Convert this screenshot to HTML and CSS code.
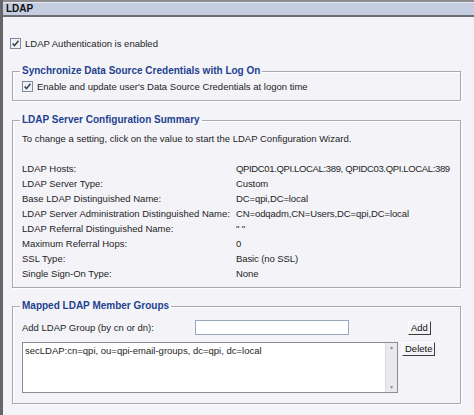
FILE: index.html
```html
<!DOCTYPE html>
<html lang="en">

<head>
    <meta charset="UTF-8">
    <title>LDAP</title>
    <link rel="stylesheet" href="styles.css">
</head>

<body>
    <div class="titlebar">LDAP</div>

    <div class="content">
        <div class="check-row top-check">
            <svg class="check" width="11" height="11" viewBox="0 0 11 11">
                <rect x="0.5" y="0.5" width="10" height="10" fill="#eef1f6" stroke="#7d8aa3" />
                <path d="M2.6 5.4 L4.5 7.6 L8.4 2.8" fill="none" stroke="#333a4a" stroke-width="1.5" />
            </svg>
            <span>LDAP Authentication is enabled</span>
        </div>

        <fieldset class="group sync-group">
            <legend>Synchronize Data Source Credentials with Log On</legend>
            <div class="check-row">
                <svg class="check" width="11" height="11" viewBox="0 0 11 11">
                    <rect x="0.5" y="0.5" width="10" height="10" fill="#eef1f6" stroke="#7d8aa3" />
                    <path d="M2.6 5.4 L4.5 7.6 L8.4 2.8" fill="none" stroke="#333a4a" stroke-width="1.5" />
                </svg>
                <span>Enable and update user's Data Source Credentials at logon time</span>
            </div>
        </fieldset>

        <fieldset class="group summary-group">
            <legend>LDAP Server Configuration Summary</legend>
            <p class="hint">To change a setting, click on the value to start the LDAP Configuration Wizard.</p>
            <div class="summary">
                <span>LDAP Hosts:</span><span class="val hosts">QPIDC01.QPI.LOCAL:389, QPIDC03.QPI.LOCAL:389</span>
                <span>LDAP Server Type:</span><span class="val">Custom</span>
                <span>Base LDAP Distinguished Name:</span><span class="val">DC=qpi,DC=local</span>
                <span>LDAP Server Administration Distinguished Name:</span><span class="val">CN=odqadm,CN=Users,DC=qpi,DC=local</span>
                <span>LDAP Referral Distinguished Name:</span><span class="val">" "</span>
                <span>Maximum Referral Hops:</span><span class="val">0</span>
                <span>SSL Type:</span><span class="val">Basic (no SSL)</span>
                <span>Single Sign-On Type:</span><span class="val">None</span>
            </div>
        </fieldset>

        <fieldset class="group groups-group">
            <legend>Mapped LDAP Member Groups</legend>
            <div class="add-row">
                <span class="add-label">Add LDAP Group (by cn or dn):</span>
                <span class="text-input"></span>
                <span class="btn add-btn">Add</span>
            </div>
            <div class="list-row">
                <div class="listbox">
                    <div class="list-text">secLDAP:cn=qpi, ou=qpi-email-groups, dc=qpi, dc=local</div>
                    <div class="scrollbar">
                        <span class="arrow">&#9650;</span>
                        <span class="arrow">&#9660;</span>
                    </div>
                </div>
                <span class="btn delete-btn">Delete</span>
            </div>
        </fieldset>
    </div>
</body>

</html>
```

FILE: styles.css
```css
html,
body {
    height: 100%;
}

body {
    margin: 0;
    background: #f3f3f8;
    border-left: 3px solid #666669;
    font-family: 'Liberation Sans', Arial, sans-serif;
    font-size: 9.5px;
    color: #1e1e1e;
    white-space: nowrap;
    box-sizing: border-box;
    overflow: hidden;
}

.titlebar {
    height: 13px;
    line-height: 13px;
    padding-left: 3px;
    background: #c4cee0;
    border-top: 2px solid #8b8b8d;
    box-shadow: inset 0 1px 0 #e4e9f2;
    border-bottom: 2px solid #6e6e72;
    font-weight: bold;
    font-size: 10px;
    color: #111;
}

.content {
    padding: 20px 13px 0 9px;
}

.check-row {
    display: flex;
    align-items: center;
    height: 12px;
}

.check-row .check {
    flex: none;
    margin-right: 4px;
}

.top-check {
    margin-left: -2px;
}

/* etched group boxes */
.group {
    min-width: 0;
    margin: 0;
    padding: 0 8px 0 9px;
    border: 1px solid #a9a9ad;
    box-shadow: inset 1px 1px 0 #fff, 1px 1px 0 #fff;
}

.group legend {
    margin-left: -2px;
    padding: 0 2px;
    font-weight: bold;
    font-size: 10px;
    color: #23418f;
    line-height: 12px;
}

.sync-group {
    margin-top: 16px;
    padding-top: 3px;
    padding-bottom: 8px;
}

.summary-group {
    margin-top: 13px;
    padding-top: 5px;
    padding-bottom: 6px;
}

.hint {
    margin: 0 0 15px;
    line-height: 15px;
}

.summary {
    display: grid;
    grid-template-columns: 214px 1fr;
    line-height: 15px;
}

.summary .val {
    letter-spacing: -0.1px;
}

.summary .hosts {
    letter-spacing: -0.35px;
}

.groups-group {
    margin-top: 12px;
    padding-top: 8px;
    padding-bottom: 10px;
}

.add-row {
    display: flex;
    align-items: center;
    height: 15px;
}

.add-label {
    width: 173px;
}

.text-input {
    width: 152px;
    height: 13px;
    background: #fff;
    border: 1px solid #9aa6bd;
}

.btn {
    display: inline-block;
    padding: 0 2px;
    line-height: 12px;
    background: #f4f4f6;
    border: 1px solid;
    border-color: #fff #3c3c3c #3c3c3c #fff;
    color: #111;
}

.add-btn {
    margin-left: 59px;
}

.list-row {
    display: flex;
    align-items: flex-start;
    margin-top: 7px;
}

.listbox {
    display: flex;
    width: 374px;
    height: 49px;
    background: #fff;
    border: 1px solid #8c8c90;
}

.list-text {
    flex: 1;
    padding: 2px 2px;
    line-height: 12px;
}

.scrollbar {
    width: 11px;
    display: flex;
    flex-direction: column;
    justify-content: space-between;
    align-items: center;
    background: #e9e9ee;
    border-left: 1px solid #d8d8de;
}

.scrollbar .arrow {
    font-size: 5px;
    line-height: 9px;
    color: #8a8a90;
}

.delete-btn {
    margin-left: 4px;
}
```
